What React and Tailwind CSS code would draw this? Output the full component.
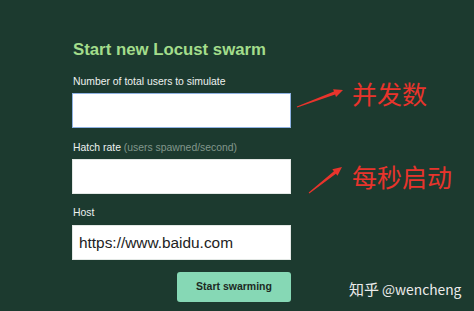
import React from "react";

function arrowPoints(tx, ty, hx, hy) {
  const dx = hx - tx, dy = hy - ty;
  const len = Math.hypot(dx, dy);
  const ux = dx / len, uy = dy / len;
  const nx = -uy, ny = ux;
  const hl = 9, hw = 4.2, sw = 1.6, tw = 0.5;
  const bx = hx - ux * hl, by = hy - uy * hl;
  const p = [
    [tx + nx * tw, ty + ny * tw],
    [bx + nx * sw, by + ny * sw],
    [bx + nx * hw, by + ny * hw],
    [hx, hy],
    [bx - nx * hw, by - ny * hw],
    [bx - nx * sw, by - ny * sw],
    [tx - nx * tw, ty - ny * tw],
  ];
  return p.map((q) => q.map((v) => v.toFixed(2)).join(",")).join(" ");
}

export default function App() {
  return (
    <div
      className="relative w-[474px] h-[311px] overflow-hidden bg-[#1c3a2f]"
      style={{ fontFamily: '"Liberation Sans", Arial, sans-serif' }}
    >
      <div className="flex flex-col w-[219px] ml-[72px] pt-[40px]">
        <h1 className="text-[16.8px] leading-[20px] font-bold text-[#a3dd8b] pl-[1px]">
          Start new Locust swarm
        </h1>
        <label className="mt-[15px] pl-[1px] text-[10.4px] leading-[13px] text-[#eef2ef]">
          Number of total users to simulate
        </label>
        <div className="mt-[5px] h-[35px] bg-white border border-[#8fb2e3]" />
        <label className="mt-[13px] pl-[1px] text-[10.4px] leading-[13px] text-[#eef2ef]">
          Hatch rate <span className="text-[#82978c]">(users spawned/second)</span>
        </label>
        <div className="mt-[5px] h-[35px] bg-white border border-[#e3e8e5]" />
        <label className="mt-[12px] pl-[1px] text-[10.4px] leading-[13px] text-[#eef2ef]">
          Host
        </label>
        <div className="mt-[6px] h-[35px] bg-white border border-[#e3e8e5] flex items-center pl-[6px] text-[15.4px] text-[#222]">
          https://www.baidu.com
        </div>
        <button className="self-end mt-[12px] w-[114px] h-[30px] rounded-[3px] bg-[#86d8b5] text-[10.5px] font-bold text-[#1d2a23]">
          Start swarming
        </button>
      </div>

      <svg className="absolute inset-0 pointer-events-none" width="474" height="311">
        <polygon points={arrowPoints(297, 107, 343, 90)} fill="#e8342c" />
        <polygon points={arrowPoints(309, 193, 342, 167)} fill="#e8342c" />
      </svg>

      <div
        className="absolute left-[352px] top-[81px] text-[25px] leading-[25px] text-[#e8342c]"
        style={{ fontFamily: '"Noto Sans CJK SC", sans-serif' }}
      >
        并发数
      </div>
      <div
        className="absolute left-[352px] top-[164px] text-[25px] leading-[25px] text-[#e8342c]"
        style={{ fontFamily: '"Noto Sans CJK SC", sans-serif' }}
      >
        每秒启动
      </div>
      <div
        className="absolute left-[349px] top-[281px] flex items-baseline gap-[3px] text-[15px] leading-[15px] text-[#ececec]"
        style={{ fontFamily: '"Noto Sans CJK SC", sans-serif' }}
      >
        <span>知乎</span>
        <span className="text-[13.8px]">@wencheng</span>
      </div>
    </div>
  );
}
